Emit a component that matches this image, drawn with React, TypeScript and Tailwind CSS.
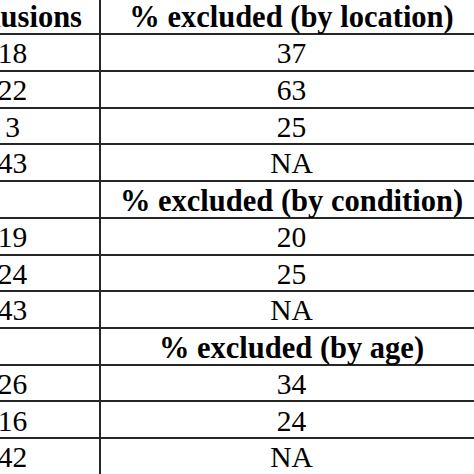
type Row =
  | { kind: 'head'; left: string; right: string }
  | { kind: 'data'; left: string; right: string }

const rows: Row[] = [
  { kind: 'head', left: 'Exclusions', right: '% excluded (by location)' },
  { kind: 'data', left: '18', right: '37' },
  { kind: 'data', left: '22', right: '63' },
  { kind: 'data', left: '3', right: '25' },
  { kind: 'data', left: '43', right: 'NA' },
  { kind: 'head', left: '', right: '% excluded (by condition)' },
  { kind: 'data', left: '19', right: '20' },
  { kind: 'data', left: '24', right: '25' },
  { kind: 'data', left: '43', right: 'NA' },
  { kind: 'head', left: '', right: '% excluded (by age)' },
  { kind: 'data', left: '26', right: '34' },
  { kind: 'data', left: '16', right: '24' },
  { kind: 'data', left: '42', right: 'NA' }
]

export default function App() {
  return (
    <div className="h-[474px] w-[474px] overflow-hidden bg-white">
      <div className="-ml-[73.5px] -mt-[1.5px] w-[560px] font-[Liberation_Serif,Times_New_Roman,serif] leading-none text-black">
        {rows.map((row, i) => {
          const cell = row.kind === 'head' ? 'text-[30.5px] font-bold' : 'text-[29.5px]'
          return (
            <div key={i} className="flex h-[36.73px] border-b-2 border-[#262626]">
              <div
                className={`flex w-[174px] shrink-0 items-center justify-center border-r-2 border-[#262626] pt-[3px] ${cell}`}
              >
                {row.left}
              </div>
              <div className={`flex w-[382px] shrink-0 items-center justify-center pt-[3px] ${cell}`}>
                {row.right}
              </div>
            </div>
          )
        })}
      </div>
    </div>
  )
}
